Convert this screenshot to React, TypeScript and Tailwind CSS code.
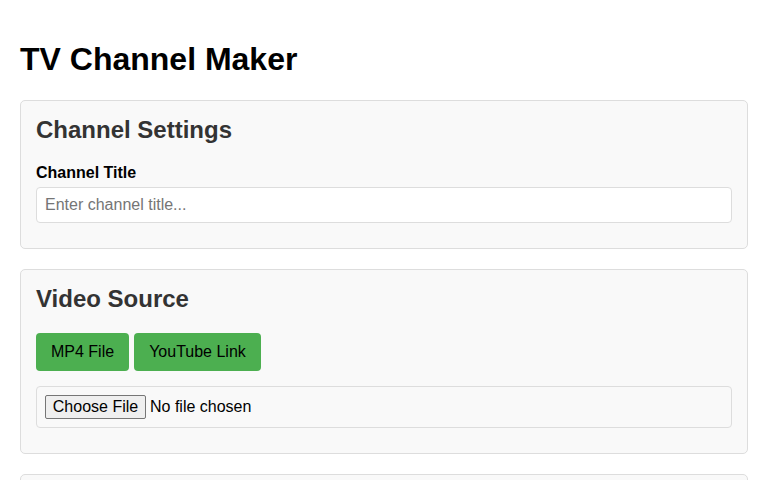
export default function App() {
  return (
    <div className="min-h-screen bg-white p-[20px] text-[16px] text-black" style={{ fontFamily: '"Liberation Sans", Arial, sans-serif' }}>
      <h1 className="mt-[21px] mb-[22px] text-[32px] font-bold leading-[37px]">TV Channel Maker</h1>

      <div className="mb-[20px] rounded-[5px] border border-[#ddd] bg-[#f9f9f9] p-[15px]">
        <h2 className="mb-[20px] text-[24px] font-bold leading-[28px] text-[#333]">Channel Settings</h2>
        <label className="mb-[5px] block font-bold leading-[18px]">Channel Title</label>
        <input
          type="text"
          placeholder="Enter channel title..."
          className="mb-[10px] block h-[36px] w-full rounded-[4px] border border-[#ddd] bg-white px-[8px] text-[16px] placeholder:text-[#757575] outline-none"
        />
      </div>

      <div className="mb-[20px] rounded-[5px] border border-[#ddd] bg-[#f9f9f9] p-[15px]">
        <h2 className="mb-[20px] text-[24px] font-bold leading-[28px] text-[#333]">Video Source</h2>
        <div className="mb-[15px] flex gap-[5px]">
          <button className="h-[38px] rounded-[4px] bg-[#4CAF50] px-[15px] text-[16px] text-black">MP4 File</button>
          <button className="h-[38px] rounded-[4px] bg-[#4CAF50] px-[15px] text-[16px] text-black">YouTube Link</button>
        </div>
        <div className="mb-[10px] flex h-[42px] items-center rounded-[4px] border border-[#ddd] px-[8px]">
          <span className="flex h-[24px] w-[101px] items-center justify-center rounded-[2px] border border-[#767676] bg-[#efefef] text-[16px]">Choose File</span>
          <span className="ml-[4px]">No file chosen</span>
        </div>
      </div>

      <div className="h-[120px] rounded-[5px] border border-[#ddd] bg-[#f9f9f9] p-[15px]"></div>
    </div>
  );
}
